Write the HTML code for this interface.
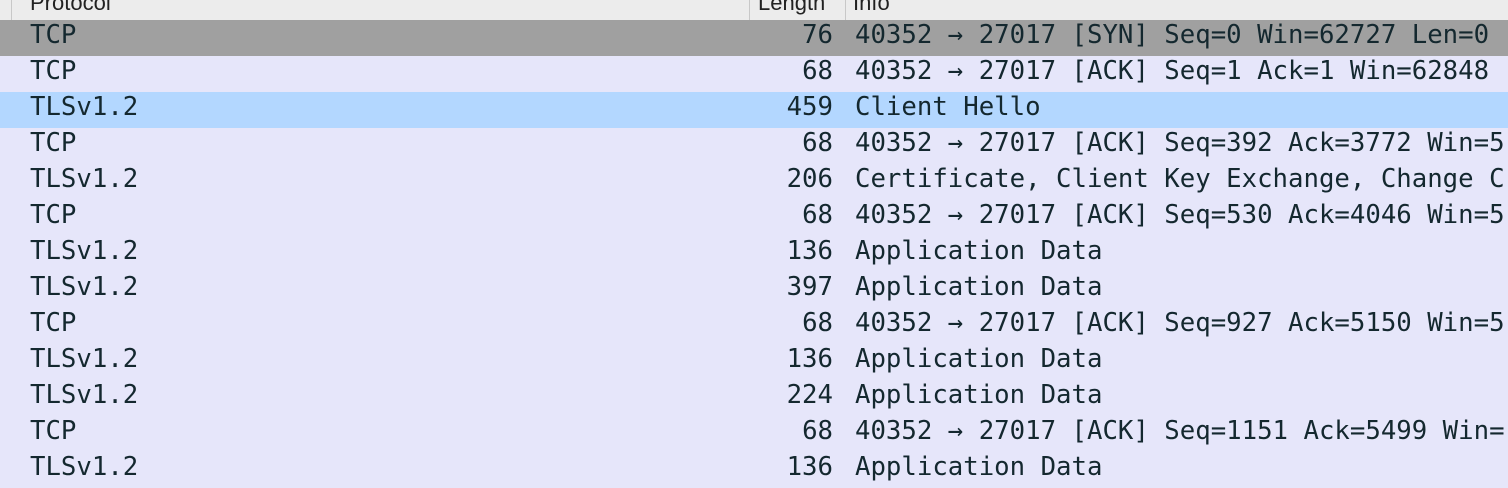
<!DOCTYPE html>
<html><head><style>
body{margin:0;width:1508px;height:478px;overflow:hidden;background:#e6e6fa;font-family:"DejaVu Sans Mono","Liberation Mono",monospace;}
.hdr{position:absolute;top:0;left:0;width:1508px;height:20px;background:#ececec;border-bottom:1px solid #d0d0d0;font-family:"Liberation Sans",sans-serif;font-size:22px;color:#222;overflow:hidden}
.hdr span{position:absolute;top:-10px;overflow:hidden;white-space:nowrap}
.sep{position:absolute;top:0;width:1px;height:20px;background:#c8c8c8}
.row{position:absolute;left:0;width:1508px;height:36px;font-size:25.7px;color:#14282f;line-height:31px;white-space:pre}
.p{position:absolute;left:30px}
.l{position:absolute;right:675px}
.i{position:absolute;left:855px}
</style></head><body>
<div class="hdr"><div class="sep" style="left:11px"></div><span style="left:30px">Protocol</span><div class="sep" style="left:749px"></div><span style="left:758px;width:80px">Length</span><div class="sep" style="left:845px"></div><span style="left:853px">Info</span></div>
<div class="row" style="top:20px;background:#a0a0a0"><span class="p">TCP</span><span class="l">76</span><span class="i">40352 → 27017 [SYN] Seq=0 Win=62727 Len=0</span></div>
<div class="row" style="top:56px"><span class="p">TCP</span><span class="l">68</span><span class="i">40352 → 27017 [ACK] Seq=1 Ack=1 Win=62848</span></div>
<div class="row" style="top:92px;background:#b3d7ff"><span class="p">TLSv1.2</span><span class="l">459</span><span class="i">Client Hello</span></div>
<div class="row" style="top:128px"><span class="p">TCP</span><span class="l">68</span><span class="i">40352 → 27017 [ACK] Seq=392 Ack=3772 Win=5</span></div>
<div class="row" style="top:164px"><span class="p">TLSv1.2</span><span class="l">206</span><span class="i">Certificate, Client Key Exchange, Change C</span></div>
<div class="row" style="top:200px"><span class="p">TCP</span><span class="l">68</span><span class="i">40352 → 27017 [ACK] Seq=530 Ack=4046 Win=5</span></div>
<div class="row" style="top:236px"><span class="p">TLSv1.2</span><span class="l">136</span><span class="i">Application Data</span></div>
<div class="row" style="top:272px"><span class="p">TLSv1.2</span><span class="l">397</span><span class="i">Application Data</span></div>
<div class="row" style="top:308px"><span class="p">TCP</span><span class="l">68</span><span class="i">40352 → 27017 [ACK] Seq=927 Ack=5150 Win=5</span></div>
<div class="row" style="top:344px"><span class="p">TLSv1.2</span><span class="l">136</span><span class="i">Application Data</span></div>
<div class="row" style="top:380px"><span class="p">TLSv1.2</span><span class="l">224</span><span class="i">Application Data</span></div>
<div class="row" style="top:416px"><span class="p">TCP</span><span class="l">68</span><span class="i">40352 → 27017 [ACK] Seq=1151 Ack=5499 Win=</span></div>
<div class="row" style="top:452px"><span class="p">TLSv1.2</span><span class="l">136</span><span class="i">Application Data</span></div>
</body></html>
